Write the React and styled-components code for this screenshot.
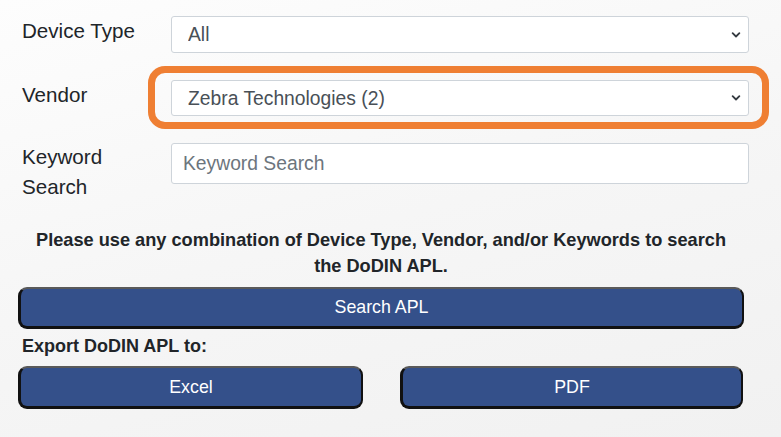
import React from 'react';
import styled, { createGlobalStyle } from 'styled-components';

const GlobalStyle = createGlobalStyle`
  html, body {
    margin: 0;
    padding: 0;
  }
  body {
    width: 781px;
    height: 437px;
    overflow: hidden;
    font-family: "Liberation Sans", Arial, sans-serif;
    background: linear-gradient(165deg, #fdfdfd 0%, #f6f6f6 50%, #f1f1f1 100%);
  }
`;

const Page = styled.div`
  padding: 16px 32px 0 18px;
  height: 437px;
  box-sizing: border-box;
`;

const Form = styled.div`
  display: flex;
  flex-direction: column;
  gap: 27px;
  padding-left: 4px;
`;

const Row = styled.div`
  display: grid;
  grid-template-columns: 149px 1fr;
  align-items: start;
`;

const Label = styled.label`
  font-size: 20.6px;
  line-height: 30px;
  color: #212529;
  max-width: 120px;
  margin-top: ${(p) => p.$offset || 0}px;
`;

const Field = styled.div`
  position: relative;
  ${(p) =>
    p.$highlight &&
    `
    &::after {
      content: '';
      position: absolute;
      top: -14px;
      bottom: -13px;
      left: -23px;
      right: -20px;
      border: 7.5px solid #ef7f33;
      border-radius: 17px;
      pointer-events: none;
    }
  `}
`;

const Select = styled.select`
  appearance: none;
  width: 100%;
  height: ${(p) => p.$h}px;
  box-sizing: border-box;
  border: 1px solid #ced4da;
  border-radius: 3px;
  background: #fff;
  font-family: "Liberation Sans", Arial, sans-serif;
  font-size: 19.3px;
  color: #495057;
  padding: 0 40px 0 16px;
  display: block;
`;

const Chevron = styled.svg`
  position: absolute;
  right: 5px;
  top: 50%;
  transform: translateY(-50%);
  width: 16px;
  height: 12px;
  pointer-events: none;
`;

const Input = styled.input`
  width: 100%;
  height: 41px;
  box-sizing: border-box;
  border: 1px solid #ced4da;
  border-radius: 3px;
  background: #fff;
  font-family: "Liberation Sans", Arial, sans-serif;
  font-size: 19.3px;
  color: #495057;
  padding: 0 11px;
  display: block;
  &::placeholder {
    color: #6c757d;
  }
`;

const Actions = styled.div`
  padding-right: 5px;
`;

const Note = styled.p`
  margin: 25px auto 8px;
  max-width: 704px;
  text-align: center;
  font-weight: bold;
  font-size: 18.2px;
  line-height: 26px;
  color: #212529;
`;

const Button = styled.button`
  display: block;
  width: 100%;
  height: ${(p) => p.$h || 43}px;
  box-sizing: border-box;
  background: #34508a;
  color: #fff;
  font-family: "Liberation Sans", Arial, sans-serif;
  font-size: 17.8px;
  border: 2px solid #111;
  border-top-color: #5a5a5a;
  border-left-width: 3px;
  border-bottom-width: 3px;
  border-radius: 9px;
  padding: 0;
`;

const Export = styled.div`
  font-weight: bold;
  font-size: 18px;
  line-height: 26px;
  color: #212529;
  margin: 4px 0 7px 4px;
`;

const ButtonRow = styled.div`
  display: grid;
  grid-template-columns: 345px 343px;
  gap: 37px;
`;

const Down = () => (
  <Chevron viewBox="0 0 16 16">
    <path d="M3.5 5.5 8 10 12.5 5.5" fill="none" stroke="#343a40" strokeWidth="2.4" strokeLinecap="round" strokeLinejoin="round" />
  </Chevron>
);

export default function App() {
  return (
    <Page>
      <GlobalStyle />
      <Form>
        <Row>
          <Label>Device Type</Label>
          <Field>
            <Select $h={37} defaultValue="All">
              <option>All</option>
            </Select>
            <Down />
          </Field>
        </Row>
        <Row>
          <Label>Vendor</Label>
          <Field $highlight>
            <Select $h={36} defaultValue="Zebra Technologies (2)">
              <option>Zebra Technologies (2)</option>
            </Select>
            <Down />
          </Field>
        </Row>
        <Row>
          <Label $offset={-1}>Keyword Search</Label>
          <Field>
            <Input placeholder="Keyword Search" />
          </Field>
        </Row>
      </Form>
      <Actions>
        <Note>
          Please use any combination of Device Type, Vendor, and/or Keywords to search the DoDIN APL.
        </Note>
        <Button $h={42}>Search APL</Button>
        <Export>Export DoDIN APL to:</Export>
        <ButtonRow>
          <Button>Excel</Button>
          <Button>PDF</Button>
        </ButtonRow>
      </Actions>
    </Page>
  );
}
